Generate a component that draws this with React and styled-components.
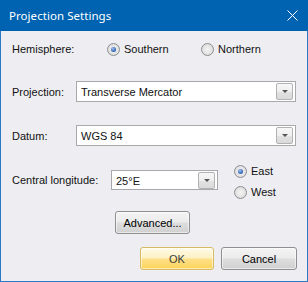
import React from 'react';
import styled, { createGlobalStyle } from 'styled-components';

const GlobalStyle = createGlobalStyle`
  html, body {
    margin: 0;
    padding: 0;
    background: #ffffff;
  }
  * {
    box-sizing: border-box;
  }
`;

const Window = styled.div`
  width: 308px;
  height: 282px;
  border: 1px solid #2a78c6;
  border-top: none;
  background: #eeeef2;
  display: flex;
  flex-direction: column;
  font-family: "Liberation Sans", Arial, sans-serif;
  font-size: 11px;
  color: #111;
`;

const TitleBar = styled.div`
  height: 31px;
  margin: 0 -1px;
  background: #0063b1;
  display: flex;
  align-items: center;
  justify-content: space-between;
  padding: 0 10px 1px 9px;
  color: #fff;
`;

const Title = styled.span`
  font-family: "Noto Sans", "Open Sans", sans-serif;
  font-size: 11.5px;
  letter-spacing: 0.05px;
`;

const CloseIcon = styled.svg`
  width: 11px;
  height: 11px;
  display: block;
`;

const Body = styled.div`
  display: flex;
  flex-direction: column;
  padding: 0 10px 0 11px;
`;

const Row = styled.div`
  display: flex;
  align-items: ${(p) => p.$align || 'center'};
  margin-top: ${(p) => p.$top}px;
  height: ${(p) => p.$height}px;
  padding-left: ${(p) => p.$indent || 0}px;
`;

const Label = styled.div`
  width: ${(p) => p.$width}px;
  flex-shrink: 0;
  margin-top: ${(p) => p.$offset || 0}px;
`;

const RadioItem = styled.label`
  display: flex;
  align-items: center;
  width: ${(p) => (p.$width ? `${p.$width}px` : 'auto')};
  height: 14px;
  gap: 4px;
`;

const RadioCircle = styled.span`
  width: 13px;
  height: 13px;
  border-radius: 50%;
  border: 1px solid #8c8e90;
  background: radial-gradient(circle at 50% 50%, #f4f4f4 0%, #e2e2e2 60%, #cfcfcf 100%);
  display: flex;
  align-items: center;
  justify-content: center;
  flex-shrink: 0;

  &::after {
    content: '';
    width: 5px;
    height: 5px;
    border-radius: 50%;
    display: ${(p) => (p.$checked ? 'block' : 'none')};
    background: radial-gradient(circle at 40% 35%, #a6c4ee 0%, #3e6fbf 55%, #1d4a98 100%);
  }
`;

const ComboBox = styled.div`
  width: ${(p) => p.$width}px;
  height: ${(p) => p.$height || 21}px;
  margin-top: ${(p) => p.$offset || 0}px;
  border: 1px solid #a9a9ab;
  background: #fff;
  display: flex;
  align-items: center;
  justify-content: space-between;
  padding: 0 2px 0 4px;
`;

const ComboText = styled.span`
  padding-top: 1px;
`;

const DropButton = styled.div`
  width: 17px;
  height: 17px;
  border: 1px solid #b0b2b4;
  border-radius: 2px;
  background: linear-gradient(#f7f7f7 0%, #efefef 50%, #e2e2e2 51%, #dadada 100%);
  display: flex;
  align-items: center;
  justify-content: center;

  &::after {
    content: '';
    width: 0;
    height: 0;
    border-left: 3px solid transparent;
    border-right: 3px solid transparent;
    border-top: 3px solid #555;
  }
`;

const SideRadios = styled.div`
  display: flex;
  flex-direction: column;
  gap: 7px;
  margin-left: 16px;
`;

const Button = styled.button`
  width: ${(p) => p.$width}px;
  height: 23px;
  border: 1px solid ${(p) => (p.$primary ? '#d8ba62' : '#8e8f8f')};
  border-radius: 3px;
  font-family: "Liberation Sans", Arial, sans-serif;
  font-size: 11px;
  color: ${(p) => (p.$primary ? '#3a3a3a' : '#000')};
  padding: 0;
  background: ${(p) =>
    p.$primary
      ? 'linear-gradient(#fffbe8 0%, #fdf0c2 48%, #fde08a 52%, #fcd45a 100%)'
      : 'linear-gradient(#f4f4f4 0%, #ebebeb 48%, #dedede 52%, #d0d0d0 100%)'};
  box-shadow: inset 0 0 0 1px rgba(255, 255, 255, 0.55);
`;

const ButtonRow = styled.div`
  display: flex;
  justify-content: flex-end;
  gap: 7px;
  margin-top: 13px;
`;

const Radio = ({ label, checked, width }) => (
  <RadioItem $width={width}>
    <RadioCircle $checked={checked} />
    {label}
  </RadioItem>
);

const App = () => (
  <>
    <GlobalStyle />
    <Window>
      <TitleBar>
        <Title>Projection Settings</Title>
        <CloseIcon viewBox="0 0 11 11">
          <path d="M0.5 0.5 L10.5 10.5 M10.5 0.5 L0.5 10.5" stroke="#fff" strokeWidth="1" fill="none" />
        </CloseIcon>
      </TitleBar>
      <Body>
        <Row $top={9} $height={18}>
          <Label $width={95}>Hemisphere:</Label>
          <Radio label="Southern" checked width={94} />
          <Radio label="Northern" />
        </Row>
        <Row $top={23} $height={21}>
          <Label $width={64}>Projection:</Label>
          <ComboBox $width={220}>
            <ComboText>Transverse Mercator</ComboText>
            <DropButton />
          </ComboBox>
        </Row>
        <Row $top={23} $height={21}>
          <Label $width={64}>Datum:</Label>
          <ComboBox $width={220}>
            <ComboText>WGS 84</ComboText>
            <DropButton />
          </ComboBox>
        </Row>
        <Row $top={18} $height={36} $align="flex-start">
          <Label $width={99} $offset={10}>Central longitude:</Label>
          <ComboBox $width={107} $height={20} $offset={6}>
            <ComboText>25°E</ComboText>
            <DropButton />
          </ComboBox>
          <SideRadios>
            <Radio label="East" checked />
            <Radio label="West" />
          </SideRadios>
        </Row>
        <Row $top={11} $height={23} $indent={103}>
          <Button $width={75}>Advanced...</Button>
        </Row>
        <ButtonRow>
          <Button $width={74} $primary>OK</Button>
          <Button $width={76}>Cancel</Button>
        </ButtonRow>
      </Body>
    </Window>
  </>
);

export default App;
